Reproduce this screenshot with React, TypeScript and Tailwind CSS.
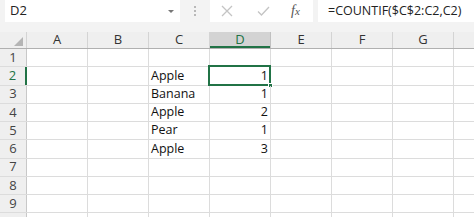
import React from 'react';

const COLS = ['A', 'B', 'C', 'D', 'E', 'F', 'G', 'H'];

// rows 1..10, values for column C and D
const DATA: Record<number, { c?: string; d?: number }> = {
  2: { c: 'Apple', d: 1 },
  3: { c: 'Banana', d: 1 },
  4: { c: 'Apple', d: 2 },
  5: { c: 'Pear', d: 1 },
  6: { c: 'Apple', d: 3 },
};

function FormulaBar() {
  return (
    <div className="h-[32px] bg-[#f3f3f3] flex items-start">
      {/* name box */}
      <div className="ml-[5px] w-[175px] h-[22px] bg-white flex items-center pl-[5px] pr-[6px]">
        <span className="text-[13px] text-[#222]">D2</span>
        <span className="ml-auto w-0 h-0 border-l-[3px] border-r-[3px] border-t-[3px] border-l-transparent border-r-transparent border-t-[#777]" />
      </div>
      {/* grip dots */}
      <div className="w-[30px] h-[22px] flex flex-col items-center justify-center gap-[2px]">
        <span className="w-[2px] h-[2px] bg-[#b8b8b8]" />
        <span className="w-[2px] h-[2px] bg-[#b8b8b8]" />
        <span className="w-[2px] h-[2px] bg-[#b8b8b8]" />
      </div>
      {/* cancel / enter / fx */}
      <div className="w-[103px] h-[22px] bg-white flex items-center">
        <svg width="12" height="12" viewBox="0 0 12 12" className="ml-[11px]">
          <path d="M1 1 L11 11 M11 1 L1 11" stroke="#c4c4c4" strokeWidth="1.3" fill="none" />
        </svg>
        <svg width="13" height="12" viewBox="0 0 13 12" className="ml-[24px]">
          <path d="M1 6.5 L4.5 10 L12 2" stroke="#c4c4c4" strokeWidth="1.3" fill="none" />
        </svg>
        <span className="ml-[21px] text-[14px] italic text-[#555] font-['Liberation_Serif',serif] leading-none">
          f<span className="text-[11px]">x</span>
        </span>
      </div>
      {/* formula */}
      <div className="ml-[5px] flex-1 h-[22px] bg-white flex items-center pl-[10px]">
        <span className="text-[12.5px] text-[#222]">=COUNTIF($C$2:C2,C2)</span>
      </div>
    </div>
  );
}

function HeaderRow() {
  return (
    <div className="flex h-[17px] bg-[#efefef] border-b border-[#b0b0b0]">
      <div className="w-[27px] shrink-0 border-r border-[#d4d4d4] relative">
        <svg width="9" height="9" viewBox="0 0 9 9" className="absolute right-[3px] bottom-[2px]">
          <path d="M9 0 L9 9 L0 9 Z" fill="#b5b5b5" />
        </svg>
      </div>
      {COLS.map((c) => (
        <div
          key={c}
          className={`w-[61px] shrink-0 flex items-center justify-center text-[13px] border-r ${
            c === 'D'
              ? 'bg-[#d3d3d3] text-[#217346] border-[#c0c0c0] shadow-[inset_0_-2px_0_#217346]'
              : 'text-[#333] border-[#d4d4d4]'
          }`}
        >
          {c === 'H' ? '' : c}
        </div>
      ))}
    </div>
  );
}

function Row({ n }: { n: number }) {
  const row = DATA[n] ?? {};
  const active = n === 2;
  return (
    <div className="flex h-[18.25px] border-b border-[#dcdcdc]">
      <div
        className={`w-[27px] shrink-0 flex items-center justify-center text-[13px] border-r bg-[#efefef] ${
          active
            ? 'bg-[#d3d3d3] text-[#217346] border-[#217346] border-r-2'
            : 'text-[#444] border-[#c8c8c8]'
        }`}
      >
        {n < 10 ? n : ''}
      </div>
      {COLS.map((c) => (
        <div
          key={c}
          className="w-[61px] shrink-0 border-r border-[#dcdcdc] relative flex items-center text-[12.5px] text-[#111]"
        >
          {c === 'C' && row.c && <span className="pl-[2px]">{row.c}</span>}
          {c === 'D' && row.d !== undefined && <span className="ml-auto pr-[2px]">{row.d}</span>}
          {c === 'D' && active && (
            <>
              <div className="absolute -left-[2px] -top-[2px] -right-[1px] -bottom-[1px] border-2 border-[#217346]" />
              <div className="absolute -right-[3px] -bottom-[3px] w-[5px] h-[5px] bg-[#217346] border border-white" />
            </>
          )}
        </div>
      ))}
    </div>
  );
}

export default function App() {
  return (
    <div className="w-[474px] h-[217px] overflow-hidden bg-white font-['Open_Sans',sans-serif]">
      <FormulaBar />
      <HeaderRow />
      {Array.from({ length: 10 }, (_, i) => (
        <Row key={i} n={i + 1} />
      ))}
    </div>
  );
}
